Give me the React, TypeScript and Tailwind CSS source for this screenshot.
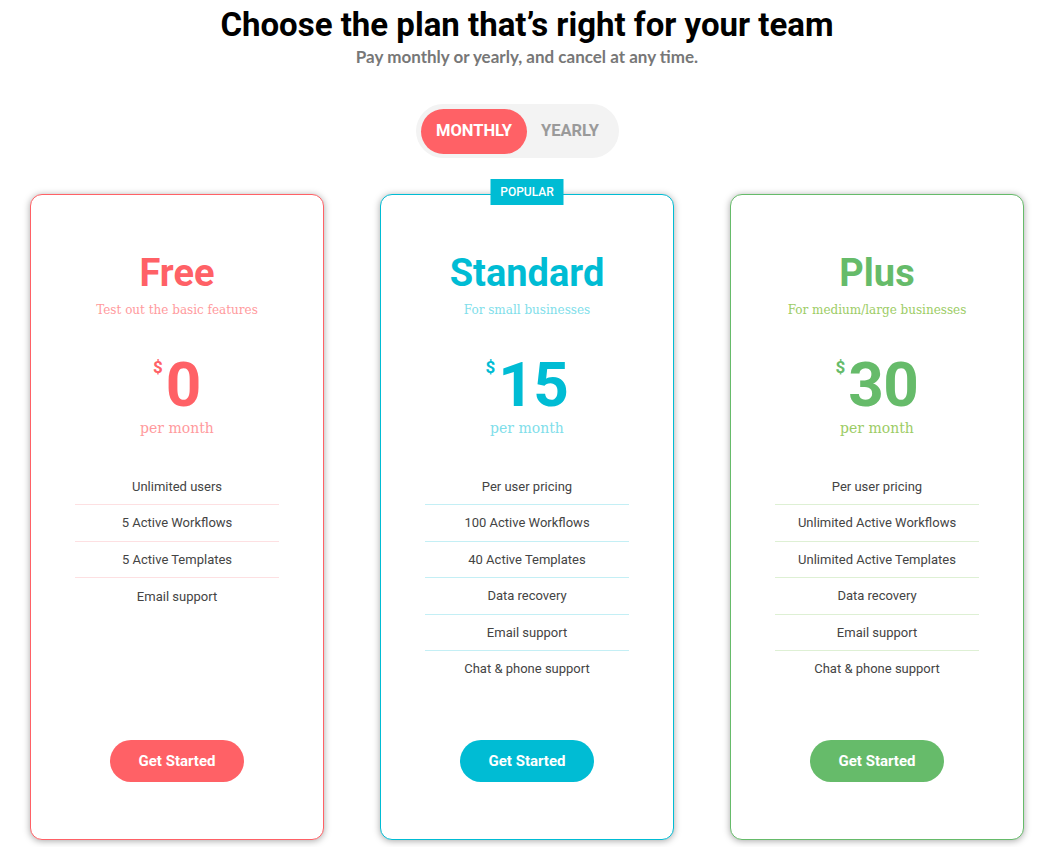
import React from "react";

type Plan = {
  name: string;
  sub: string;
  price: string;
  features: string[];
  main: string;
  light: string;
  divider: string;
  border: string;
  btn: string;
  popular?: boolean;
};

const plans: Plan[] = [
  {
    name: "Free",
    sub: "Test out the basic features",
    price: "0",
    features: ["Unlimited users", "5 Active Workflows", "5 Active Templates", "Email support"],
    main: "text-[#ff6166]",
    light: "text-[#ff9a9d]",
    divider: "border-[#fde0e2]",
    border: "border-[#ff6166]",
    btn: "bg-[#ff6166]",
  },
  {
    name: "Standard",
    sub: "For small businesses",
    price: "15",
    features: [
      "Per user pricing",
      "100 Active Workflows",
      "40 Active Templates",
      "Data recovery",
      "Email support",
      "Chat & phone support",
    ],
    main: "text-[#00bcd4]",
    light: "text-[#80deea]",
    divider: "border-[#c4eff5]",
    border: "border-[#00bcd4]",
    btn: "bg-[#00bcd4]",
    popular: true,
  },
  {
    name: "Plus",
    sub: "For medium/large businesses",
    price: "30",
    features: [
      "Per user pricing",
      "Unlimited Active Workflows",
      "Unlimited Active Templates",
      "Data recovery",
      "Email support",
      "Chat & phone support",
    ],
    main: "text-[#66bb6a]",
    light: "text-[#9ccc65]",
    divider: "border-[#def0d4]",
    border: "border-[#66bb6a]",
    btn: "bg-[#66bb6a]",
  },
];

const roboto = "font-['Roboto',sans-serif]";
const slab = "font-['DejaVu_Serif',serif]";

function Card({ p }: { p: Plan }) {
  return (
    <div
      className={`relative flex h-[646px] flex-col items-center rounded-[12px] border bg-white shadow-[0_1px_7px_rgba(0,0,0,0.35)] ${p.border}`}
    >
      {p.popular && (
        <div
          className={`absolute left-1/2 top-[-16px] flex h-[26px] w-[73px] -translate-x-1/2 items-center justify-center bg-[#00bcd4] text-[12px] font-medium text-white ${roboto}`}
        >
          POPULAR
        </div>
      )}
      <div className={`mt-[56px] text-[38px] font-bold leading-[44px] ${p.main} ${roboto}`}>{p.name}</div>
      <div className={`mt-[5px] text-[12px] leading-[20px] ${p.light} ${slab}`}>{p.sub}</div>
      <div className={`mt-[34px] flex ${p.main} ${roboto}`}>
        <span className="mt-[3px] mr-[3px] text-[17px] font-bold leading-[20px]">$</span>
        <span className="text-[62px] font-bold leading-[62px] tracking-[-0.5px]">{p.price}</span>
      </div>
      <div className={`mt-0 text-[14px] leading-[24px] ${p.light} ${slab}`}>per month</div>
      <div className="mt-[29px] w-[204px]">
        {p.features.map((f, i) => (
          <div
            key={f}
            className={`flex h-[36.4px] items-center justify-center text-[13px] text-[#444] ${roboto} ${
              i < p.features.length - 1 ? `border-b ${p.divider}` : ""
            }`}
          >
            {f}
          </div>
        ))}
      </div>
      <button
        className={`mt-auto mb-[57px] h-[42px] w-[134px] rounded-full text-[15px] font-bold text-white ${p.btn} ${roboto}`}
      >
        Get Started
      </button>
    </div>
  );
}

export default function App() {
  return (
    <div className="min-h-[847px] w-full bg-white">
      <div className="flex flex-col items-center">
        <h1 className={`mt-[6px] text-[33px] font-bold leading-[37px] text-black ${roboto}`}>
          Choose the plan that’s right for your team
        </h1>
        <p className="mt-[2px] font-['Lato',sans-serif] text-[17px] font-bold leading-[24px] text-[#777]">
          Pay monthly or yearly, and cancel at any time.
        </p>
        <div
          className={`mt-[35px] mr-[19px] flex h-[54px] items-center rounded-full bg-[#f3f3f3] px-[5px] ${roboto}`}
        >
          <div className="flex h-[45px] w-[106px] items-center justify-center rounded-full bg-[#ff6166] text-[16.5px] font-bold text-white">
            MONTHLY
          </div>
          <div className="flex h-[45px] w-[87px] items-center justify-center pl-[2px] pr-[3px] text-[16.5px] font-bold text-[#9a9a9a]">
            YEARLY
          </div>
        </div>
      </div>
      <div className="mt-[36px] grid grid-cols-3 gap-[56px] px-[30px]">
        {plans.map((p) => (
          <Card key={p.name} p={p} />
        ))}
      </div>
    </div>
  );
}
